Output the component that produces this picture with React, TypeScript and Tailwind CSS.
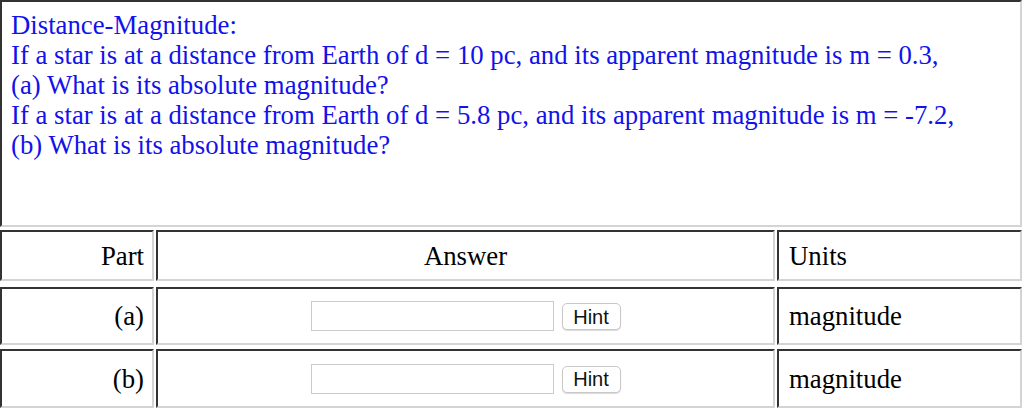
import React from 'react';

const cellBorder =
  'border-2 border-t-[#333333] border-l-[#333333] border-b-[#d4d4d4] border-r-[#d4d4d4]';

function AnswerCell() {
  return (
    <div className={`${cellBorder} w-[619px] flex items-center justify-center gap-[8px]`}>
      <input
        type="text"
        className="w-[243px] h-[30px] border border-[#cccccc] bg-white outline-none"
      />
      <button className="w-[59px] h-[27px] mt-[1px] rounded-[5px] border border-[#c8c8c8] bg-white shadow-[0_1px_1px_rgba(0,0,0,0.15)] font-['Liberation_Sans',Arial,sans-serif] text-[20px] leading-none text-[#111]">
        Hint
      </button>
    </div>
  );
}

function Row({ part, height, top }: { part: string; height: string; top: string }) {
  return (
    <div className={`flex gap-[2px] ${height} ${top}`}>
      <div className={`${cellBorder} w-[154px] flex items-center justify-end pr-[8px]`}>{part}</div>
      <AnswerCell />
      <div className={`${cellBorder} w-[245px] flex items-center pl-[10px]`}>magnitude</div>
    </div>
  );
}

export default function App() {
  return (
    <div className="w-[1022px] bg-white font-['Liberation_Serif','Times_New_Roman',serif] text-[26.75px] leading-[30px] text-black">
      {/* Question box */}
      <div className={`${cellBorder} h-[227px] pt-[8px] pl-[9px] text-[#1212ea]`}>
        <div>Distance-Magnitude:</div>
        <div>If a star is at a distance from Earth of d = 10 pc, and its apparent magnitude is m = 0.3,</div>
        <div>(a) What is its absolute magnitude?</div>
        <div>If a star is at a distance from Earth of d = 5.8 pc, and its apparent magnitude is m = -7.2,</div>
        <div>(b) What is its absolute magnitude?</div>
      </div>

      {/* Header */}
      <div className="flex gap-[2px] h-[51px] mt-[3px]">
        <div className={`${cellBorder} w-[154px] flex items-center justify-end pr-[8px]`}>Part</div>
        <div className={`${cellBorder} w-[619px] flex items-center justify-center`}>Answer</div>
        <div className={`${cellBorder} w-[245px] flex items-center pl-[10px]`}>Units</div>
      </div>

      <Row part="(a)" height="h-[58px]" top="mt-[6px]" />
      <Row part="(b)" height="h-[59px]" top="mt-[4px]" />
    </div>
  );
}
